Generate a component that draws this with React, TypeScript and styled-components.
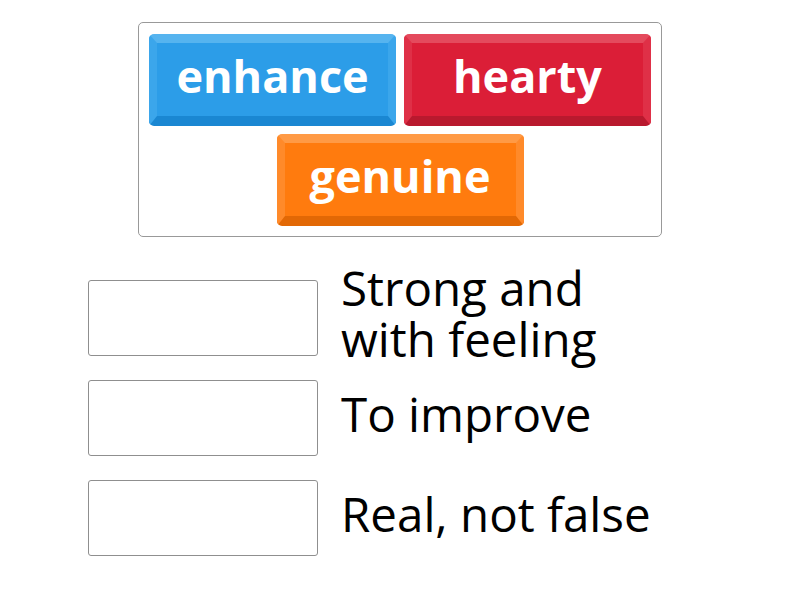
import React from "react";
import styled, { createGlobalStyle } from "styled-components";

const Global = createGlobalStyle`
  html, body { margin: 0; padding: 0; background: #fff; }
  body { font-family: "Open Sans", "Liberation Sans", sans-serif; }
`;

const Page = styled.div`
  width: 800px;
  height: 600px;
  display: flex;
  flex-direction: column;
  align-items: center;
  padding-top: 22px;
  box-sizing: border-box;
`;

const Bank = styled.div`
  width: 524px;
  box-sizing: border-box;
  border: 1px solid #999999;
  border-radius: 5px;
  padding: 11px 10px 10px 10px;
  display: flex;
  flex-wrap: wrap;
  justify-content: center;
  gap: 8px;
`;

type Tone = { body: string; top: string; side: string; bottom: string };

const tones: Record<string, Tone> = {
  blue: { body: "#2c9de8", top: "#56b4ef", side: "#3ba6eb", bottom: "#1a87d2" },
  red: { body: "#db1e37", top: "#e44a5d", side: "#df3047", bottom: "#b9192e" },
  orange: { body: "#ff7b0e", top: "#ff9a45", side: "#ff8a2a", bottom: "#e26805" },
};

const Tile = styled.div<{ $tone: Tone }>`
  width: 247px;
  height: 92px;
  box-sizing: border-box;
  border-radius: 5px;
  border-style: solid;
  border-width: 9px 8px 10px 8px;
  border-color: ${(p) => p.$tone.top} ${(p) => p.$tone.side} ${(p) => p.$tone.bottom} ${(p) => p.$tone.side};
  background: ${(p) => p.$tone.body};
  display: flex;
  align-items: center;
  justify-content: center;
  color: #fff;
  font-family: "Open Sans", sans-serif;
  font-weight: 700;
  font-size: 45px;
  line-height: 1;
  padding-bottom: 8px;
`;

const Pairs = styled.div`
  margin-top: 43px;
  align-self: stretch;
  padding-left: 88px;
  display: flex;
  flex-direction: column;
  gap: 24px;
`;

const Row = styled.div`
  display: flex;
  align-items: center;
  height: 76px;
  gap: 23px;
`;

const Slot = styled.div`
  width: 230px;
  height: 76px;
  box-sizing: border-box;
  border: 1px solid #8f8f8f;
  border-radius: 3px;
  flex: none;
`;

const Clue = styled.div`
  font-family: "Open Sans", sans-serif;
  font-size: 47.5px;
  line-height: 51px;
  color: #000;
  margin-bottom: 10px;
  white-space: pre-line;
`;

export default function App() {
  return (
    <>
      <Global />
      <Page>
        <Bank>
          <Tile $tone={tones.blue}>enhance</Tile>
          <Tile $tone={tones.red}>hearty</Tile>
          <Tile $tone={tones.orange}>genuine</Tile>
        </Bank>
        <Pairs>
          <Row>
            <Slot />
            <Clue>{"Strong and\nwith feeling"}</Clue>
          </Row>
          <Row>
            <Slot />
            <Clue>To improve</Clue>
          </Row>
          <Row>
            <Slot />
            <Clue>Real, not false</Clue>
          </Row>
        </Pairs>
      </Page>
    </>
  );
}
